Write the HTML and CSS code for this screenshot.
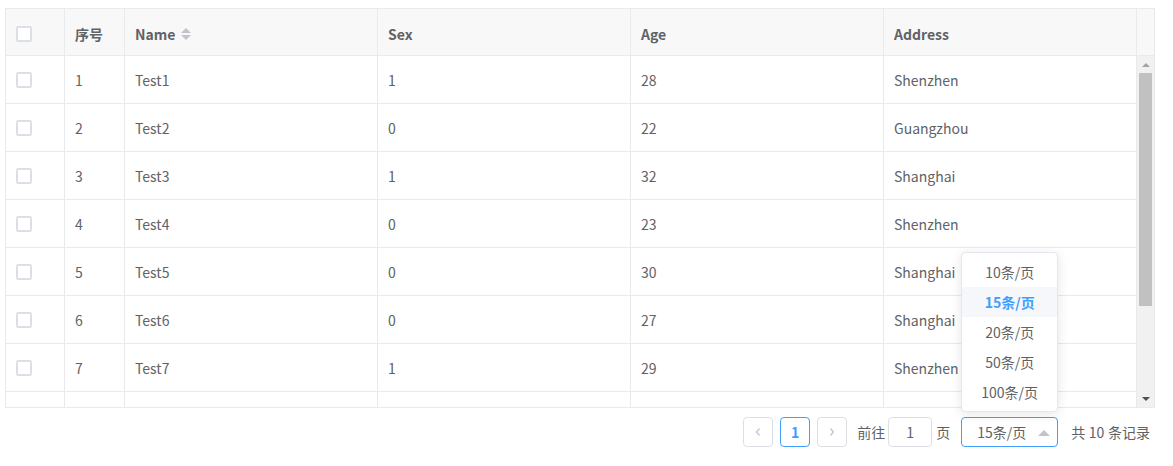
FILE: index.html
```html
<!DOCTYPE html>
<html lang="zh-CN">
<head>
<meta charset="UTF-8">
<meta name="viewport" content="width=device-width, initial-scale=1.0">
<title>Table</title>
<link rel="stylesheet" href="styles.css">
</head>
<body>

<div class="grid">
  <div class="grid-row grid-head">
    <div class="cell"><span class="checkbox"></span></div>
    <div class="cell">序号</div>
    <div class="cell">Name
      <span class="sort">
        <i class="sort-up"></i>
        <i class="sort-down"></i>
      </span>
    </div>
    <div class="cell">Sex</div>
    <div class="cell">Age</div>
    <div class="cell">Address</div>
    <div class="cell gutter"></div>
  </div>

  <div class="grid-body">
    <div class="body-view">
      <div class="grid-row"><div class="cell"><span class="checkbox"></span></div><div class="cell">1</div><div class="cell">Test1</div><div class="cell">1</div><div class="cell">28</div><div class="cell">Shenzhen</div></div>
      <div class="grid-row"><div class="cell"><span class="checkbox"></span></div><div class="cell">2</div><div class="cell">Test2</div><div class="cell">0</div><div class="cell">22</div><div class="cell">Guangzhou</div></div>
      <div class="grid-row"><div class="cell"><span class="checkbox"></span></div><div class="cell">3</div><div class="cell">Test3</div><div class="cell">1</div><div class="cell">32</div><div class="cell">Shanghai</div></div>
      <div class="grid-row"><div class="cell"><span class="checkbox"></span></div><div class="cell">4</div><div class="cell">Test4</div><div class="cell">0</div><div class="cell">23</div><div class="cell">Shenzhen</div></div>
      <div class="grid-row"><div class="cell"><span class="checkbox"></span></div><div class="cell">5</div><div class="cell">Test5</div><div class="cell">0</div><div class="cell">30</div><div class="cell">Shanghai</div></div>
      <div class="grid-row"><div class="cell"><span class="checkbox"></span></div><div class="cell">6</div><div class="cell">Test6</div><div class="cell">0</div><div class="cell">27</div><div class="cell">Shanghai</div></div>
      <div class="grid-row"><div class="cell"><span class="checkbox"></span></div><div class="cell">7</div><div class="cell">Test7</div><div class="cell">1</div><div class="cell">29</div><div class="cell">Shenzhen</div></div>
      <!-- next row only peeks in under the fold -->
      <div class="grid-row"><div class="cell"></div><div class="cell"></div><div class="cell"></div><div class="cell"></div><div class="cell"></div><div class="cell"></div></div>
    </div>
    <div class="scrollbar">
      <div class="sb-btn"><i class="sb-arrow-up"></i></div>
      <div class="sb-track"><div class="sb-thumb"></div></div>
      <div class="sb-btn"><i class="sb-arrow-down"></i></div>
    </div>
  </div>
</div>

<div class="pager">
  <button class="pg-btn">
    <svg width="10" height="10" viewBox="0 0 10 10"><polyline points="6.5,1.5 3.5,5 6.5,8.5" fill="none" stroke="#c0c4cc" stroke-width="1.2"/></svg>
  </button>
  <button class="pg-btn pg-active">1</button>
  <button class="pg-btn">
    <svg width="10" height="10" viewBox="0 0 10 10"><polyline points="3.5,1.5 6.5,5 3.5,8.5" fill="none" stroke="#c0c4cc" stroke-width="1.2"/></svg>
  </button>
  <span class="pg-text pg-goto">前往</span>
  <input class="pg-input" type="text" value="1">
  <span class="pg-text">页</span>
  <div class="pg-sizes">
    <div class="pg-select">15条/页<i class="select-arrow"></i></div>
    <ul class="dropdown">
      <li>10条/页</li>
      <li class="selected">15条/页</li>
      <li>20条/页</li>
      <li>50条/页</li>
      <li>100条/页</li>
    </ul>
  </div>
  <span class="pg-text pg-total">共 10 条记录</span>
</div>

</body>
</html>
```

FILE: styles.css
```css
body {
  margin: 0;
  padding: 8px 0 0 5px;
  font-family: "Noto Sans CJK SC", "Noto Sans", sans-serif;
  font-size: 14px;
  color: #606266;
  background-color: #fff;
}
.grid {
  width: 1150px;
  box-sizing: border-box;
  border: 1px solid #e8eaec;
}
.grid-row {
  display: grid;
  grid-template-columns: 59px 60px 253px 253px 253px 253px;
}
.grid-head {
  grid-template-columns: 59px 60px 253px 253px 253px 253px 1fr;
  background-color: #f8f8f9;
  font-weight: bold;
}
.cell {
  box-sizing: border-box;
  height: 48px;
  padding: 0 10px;
  display: flex;
  align-items: center;
  border-right: 1px solid #e8eaec;
  border-bottom: 1px solid #e8eaec;
  white-space: nowrap;
}
.grid-head .cell {
  height: 47px;
  padding-top: 4px;
}
.grid-head .gutter {
  border-right: none;
  padding: 0;
}
.checkbox {
  display: inline-block;
  width: 16px;
  height: 16px;
  box-sizing: border-box;
  border: 2px solid #dcdfe6;
  border-radius: 2px;
  background-color: #fff;
}
.sort {
  display: inline-flex;
  flex-direction: column;
  gap: 2px;
  margin-left: 6px;
}
.sort i {
  width: 0;
  height: 0;
  border-left: 5px solid transparent;
  border-right: 5px solid transparent;
}
.sort-up {
  border-bottom: 5px solid #c0c4cc;
}
.sort-down {
  border-top: 5px solid #c0c4cc;
}
.grid-body {
  display: flex;
  height: 351px;
}
.body-view {
  width: 1131px;
  overflow: hidden;
}
.scrollbar {
  flex: 1;
  display: flex;
  flex-direction: column;
  background-color: #f1f1f1;
}
.sb-btn {
  height: 17px;
  display: flex;
  align-items: center;
  justify-content: center;
}
.sb-arrow-up {
  width: 0;
  height: 0;
  border-left: 4px solid transparent;
  border-right: 4px solid transparent;
  border-bottom: 4px solid #a3a3a3;
}
.sb-arrow-down {
  width: 0;
  height: 0;
  border-left: 4px solid transparent;
  border-right: 4px solid transparent;
  border-top: 4px solid #505050;
}
.sb-track {
  flex: 1;
  padding: 0 2px;
}
.sb-thumb {
  height: 233px;
  background-color: #c1c1c1;
}
.pager {
  width: 1150px;
  box-sizing: border-box;
  margin-top: 9px;
  padding-right: 5px;
  display: flex;
  justify-content: flex-end;
  align-items: center;
  height: 30px;
}
.pg-btn {
  width: 30px;
  height: 30px;
  box-sizing: border-box;
  margin-left: 7px;
  padding: 0;
  border: 1px solid #dcdfe6;
  border-radius: 4px;
  background-color: #fff;
  font-family: inherit;
  font-size: 14px;
  display: flex;
  align-items: center;
  justify-content: center;
}
.pg-btn:first-child {
  margin-left: 0;
}
.pg-active {
  border-color: #409eff;
  color: #409eff;
  font-weight: bold;
}
.pg-text {
  white-space: nowrap;
}
.pg-goto {
  margin-left: 10px;
  margin-right: 3px;
}
.pg-input {
  width: 44px;
  height: 30px;
  box-sizing: border-box;
  margin-right: 4px;
  border: 1px solid #dcdfe6;
  border-radius: 4px;
  text-align: center;
  font-family: inherit;
  font-size: 14px;
  color: #606266;
  outline: none;
}
.pg-sizes {
  position: relative;
  margin-left: 11px;
}
.pg-select {
  width: 97px;
  height: 30px;
  box-sizing: border-box;
  border: 1px solid #409eff;
  border-radius: 4px;
  padding-right: 16px;
  display: flex;
  align-items: center;
  justify-content: center;
}
.select-arrow {
  position: absolute;
  right: 8px;
  top: 13px;
  width: 0;
  height: 0;
  border-left: 6px solid transparent;
  border-right: 6px solid transparent;
  border-bottom: 6px solid #c0c4cc;
}
.dropdown {
  position: absolute;
  left: 0;
  bottom: 35px;
  width: 97px;
  box-sizing: border-box;
  margin: 0;
  padding: 4px 0;
  list-style: none;
  background-color: #fff;
  border: 1px solid #e4e7ed;
  border-radius: 4px;
  box-shadow: 0 2px 12px rgba(0, 0, 0, 0.1);
}
.dropdown li {
  height: 30px;
  line-height: 30px;
  text-align: center;
}
.dropdown .selected {
  background-color: #f5f7fa;
  color: #409eff;
  font-weight: bold;
}
.pg-total {
  margin-left: 13px;
  word-spacing: 0.5px;
}
```
